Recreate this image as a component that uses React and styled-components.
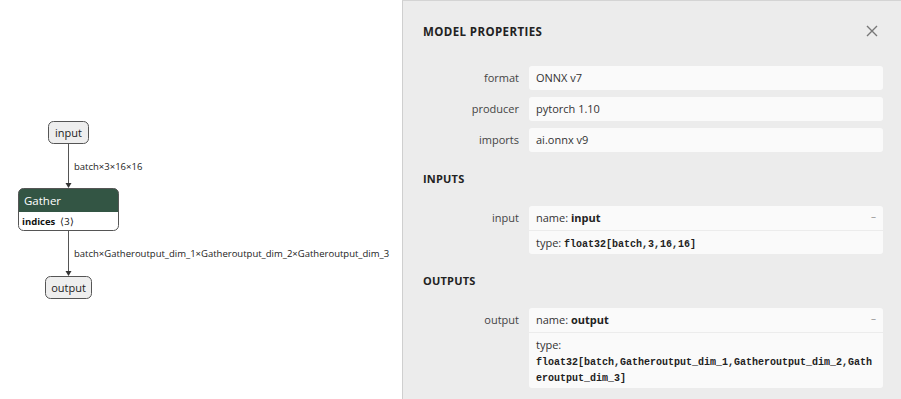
import React from 'react'
import { styled, createGlobalStyle } from 'styled-components'

const GlobalStyle = createGlobalStyle`
  html, body, #root {
    margin: 0;
    padding: 0;
    height: 100%;
  }
  body {
    font-family: 'Open Sans', 'Noto Sans', sans-serif;
    color: #333;
    overflow: hidden;
  }
`

const MONO = "'Liberation Mono', 'DejaVu Sans Mono', monospace"

const S = {
  Page: styled.div`
    display: flex;
    width: 901px;
    height: 399px;
    background: #fff;
  `,
  GraphPane: styled.div`
    flex: 1;
    background: #fff;
    svg {
      display: block;
    }
  `,
  Sidebar: styled.aside`
    width: 499px;
    box-sizing: border-box;
    background: #ececec;
    border-left: 1px solid #cfcfcf;
    border-top: 1px solid #d4d4d4;
    padding: 22px 18px 0 20px;
    display: flex;
    flex-direction: column;
  `,
  Header: styled.div`
    display: flex;
    align-items: center;
    justify-content: space-between;
    height: 16px;
    margin-bottom: 27px;
  `,
  Title: styled.h1`
    margin: 0;
    font-size: 11.5px;
    font-weight: 700;
    letter-spacing: 0.4px;
    text-transform: uppercase;
    color: #222;
  `,
  Close: styled.button`
    border: 0;
    background: none;
    padding: 0;
    margin-right: 4px;
    width: 14px;
    height: 14px;
    display: flex;
    align-items: center;
    justify-content: center;
    cursor: pointer;
  `,
  Section: styled.h2`
    margin: 12px 0 19px 0;
    font-size: 11px;
    line-height: 16px;
    font-weight: 700;
    letter-spacing: 0.2px;
    text-transform: uppercase;
    color: #222;
  `,
  Row: styled.div`
    display: flex;
    align-items: flex-start;
    margin-bottom: 7px;
  `,
  Label: styled.div`
    width: 96px;
    padding: 4px 10px 4px 0;
    box-sizing: content-box;
    text-align: right;
    font-size: 11px;
    line-height: 16px;
    color: #444;
    flex-shrink: 0;
  `,
  Value: styled.div`
    flex: 1;
    min-width: 0;
    background: #fafafa;
    border-radius: 3px;
    font-size: 11px;
    line-height: 16px;
    color: #333;
  `,
  Line: styled.div`
    display: flex;
    justify-content: space-between;
    align-items: flex-start;
    padding: ${({ $last }) => ($last ? '4px 7px 3px' : '4px 7px')};
    border-top: ${({ $divided }) => ($divided ? '1px solid #ececec' : '0')};
  `,
  Text: styled.span`
    min-width: 0;
    overflow-wrap: break-word;
  `,
  Bold: styled.b`
    font-weight: 700;
    color: #222;
  `,
  Code: styled.code`
    font-family: ${MONO};
    font-size: 10px;
    line-height: 1;
    font-weight: 700;
    color: #222;
  `,
  Toggle: styled.span`
    font-size: 10px;
    line-height: 12px;
    color: #999;
    padding-left: 6px;
  `,
}

const CloseIcon = () => (
  <svg width="12" height="12" viewBox="0 0 12 12">
    <path d="M1 1 L11 11 M11 1 L1 11" stroke="#777" strokeWidth="1.4" />
  </svg>
)

const Arrow = ({ x, y1, y2 }) => (
  <g>
    <line x1={x} y1={y1} x2={x} y2={y2 - 4} stroke="#555" strokeWidth="1" />
    <path d={`M${x - 3} ${y2 - 5} L${x + 3} ${y2 - 5} L${x} ${y2} Z`} fill="#333" />
  </g>
)

const Graph = () => (
  <svg width="402" height="399" fontFamily="'Open Sans', 'Noto Sans', sans-serif">
    <rect x="48.5" y="121.5" width="40" height="22" rx="5" fill="#eee" stroke="#555" />
    <text x="68.5" y="136.5" fontSize="11" textAnchor="middle" fill="#222">input</text>

    <Arrow x={68.5} y1={144} y2={188} />
    <text x="74" y="169.5" fontSize="9.5" fill="#222">batch×3×16×16</text>

    <path d="M18.5 212 V193.5 a5 5 0 0 1 5 -5 H113.5 a5 5 0 0 1 5 5 V212 Z" fill="#335544" />
    <path d="M18.5 212 V225.5 a5 5 0 0 0 5 5 H113.5 a5 5 0 0 0 5 -5 V212 Z" fill="#fff" />
    <rect x="18.5" y="188.5" width="100" height="42" rx="5" fill="none" stroke="#555" />
    <text x="24" y="205" fontSize="11.5" fill="#fff">Gather</text>
    <text x="22" y="225" fontSize="9.5" fill="#111">
      <tspan fontWeight="700">indices</tspan>
      <tspan dx="5">⟨3⟩</tspan>
    </text>

    <Arrow x={68.5} y1={231} y2={276} />
    <text x="74" y="256.5" fontSize="9.5" fill="#222">
      batch×Gatheroutput_dim_1×Gatheroutput_dim_2×Gatheroutput_dim_3
    </text>

    <rect x="45.5" y="276.5" width="46" height="22" rx="5" fill="#eee" stroke="#555" />
    <text x="68.5" y="291.5" fontSize="11" textAnchor="middle" fill="#222">output</text>
  </svg>
)

const properties = [
  { name: 'format', value: 'ONNX v7' },
  { name: 'producer', value: 'pytorch 1.10' },
  { name: 'imports', value: 'ai.onnx v9' },
]

const Argument = ({ label, name, type }) => (
  <S.Row>
    <S.Label>{label}</S.Label>
    <S.Value>
      <S.Line>
        <S.Text>
          name: <S.Bold>{name}</S.Bold>
        </S.Text>
        <S.Toggle>–</S.Toggle>
      </S.Line>
      <S.Line $divided $last>
        <S.Text>
          type: <S.Code>{type}</S.Code>
        </S.Text>
      </S.Line>
    </S.Value>
  </S.Row>
)

const App = () => (
  <>
    <GlobalStyle />
    <S.Page>
      <S.GraphPane>
        <Graph />
      </S.GraphPane>
      <S.Sidebar>
        <S.Header>
          <S.Title>Model Properties</S.Title>
          <S.Close aria-label="Close">
            <CloseIcon />
          </S.Close>
        </S.Header>

        {properties.map((p) => (
          <S.Row key={p.name}>
            <S.Label>{p.name}</S.Label>
            <S.Value>
              <S.Line>{p.value}</S.Line>
            </S.Value>
          </S.Row>
        ))}

        <S.Section>Inputs</S.Section>
        <Argument label="input" name="input" type="float32[batch,3,16,16]" />

        <S.Section>Outputs</S.Section>
        <Argument
          label="output"
          name="output"
          type="float32[batch,Gatheroutput_dim_1,Gatheroutput_dim_2,Gatheroutput_dim_3]"
        />
      </S.Sidebar>
    </S.Page>
  </>
)

export default App
